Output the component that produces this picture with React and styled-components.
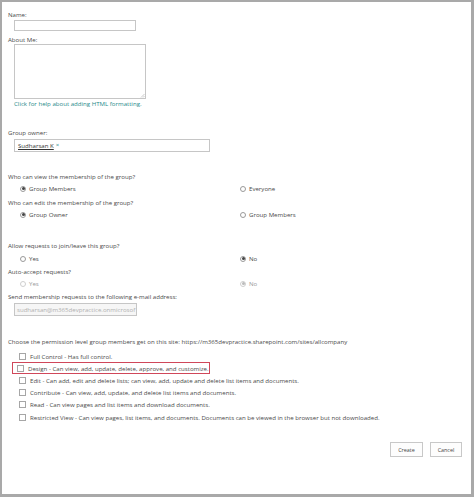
import React from "react";
import styled, { createGlobalStyle } from "styled-components";

const Global = createGlobalStyle`
  html, body { margin: 0; padding: 0; background: #fff; }
  body { font-family: "Open Sans", "Noto Sans", sans-serif; }
  * { box-sizing: border-box; }
`;

const Frame = styled.div`
  width: 474px;
  height: 497px;
  border-style: solid;
  border-color: #a9a9a9;
  border-width: 2px 3px 3px 2px;
  background: #fff;
  padding: 7.5px 9px 0 6px;
  color: #4a4a4a;
  font-size: 6.1px;
  line-height: 9px;
`;

const Label = styled.div`
  margin-top: ${(p) => p.$mt || 0}px;
  height: 9px;
  white-space: nowrap;
`;

const Indent = styled.div`
  padding-left: ${(p) => p.$pl || 6}px;
  margin-top: ${(p) => p.$mt || 0}px;
`;

const TextBox = styled.div`
  width: ${(p) => p.$w}px;
  height: ${(p) => p.$h}px;
  border: 1px solid #c6c6c6;
  background: ${(p) => (p.$disabled ? "#f6f6f6" : "#fff")};
  color: ${(p) => (p.$disabled ? "#b0b0b0" : "#444")};
  display: flex;
  align-items: center;
  padding-left: ${(p) => (p.$disabled ? 2 : 3)}px;
  white-space: nowrap;
  gap: 2px;
`;

const Area = styled.div`
  position: relative;
  width: 132px;
  height: 55px;
  border: 1px solid #c6c6c6;
`;

const Grip = styled.svg`
  position: absolute;
  right: 0;
  bottom: 0;
`;

const HelpLink = styled.div`
  color: #1f8a8a;
  height: 9px;
  white-space: nowrap;
`;

const Person = styled.span`
  color: #333;
  text-decoration: underline;
`;

const Remove = styled.span`
  color: #1f8a8a;
  font-size: 6px;
`;

const RadioRow = styled.div`
  display: grid;
  grid-template-columns: 220px 1fr;
  padding-left: 12px;
  margin-top: ${(p) => p.$mt || 0}px;
  height: 9px;
`;

const Option = styled.label`
  display: flex;
  align-items: center;
  gap: 3px;
  white-space: nowrap;
  color: ${(p) => (p.$disabled ? "#999" : "#4a4a4a")};
`;

const Radio = styled.span`
  width: 6px;
  height: 6px;
  border-radius: 50%;
  border: 1px solid ${(p) => (p.$disabled ? "#cfcfcf" : "#9a9a9a")};
  display: flex;
  align-items: center;
  justify-content: center;
  background: #fff;
  &::after {
    content: "";
    width: 3px;
    height: 3px;
    border-radius: 50%;
    background: ${(p) => (p.$disabled ? "#bbb" : "#444")};
    display: ${(p) => (p.$checked ? "block" : "none")};
  }
`;

const Checks = styled.div`
  margin-top: 4px;
  padding-left: 5px;
`;

const CheckRow = styled.div`
  display: flex;
  align-items: center;
  gap: 4px;
  height: 12.2px;
  white-space: nowrap;
  width: ${(p) => (p.$hl ? "198px" : "auto")};
  margin-left: ${(p) => (p.$hl ? "-1px" : "0")};
  border: ${(p) => (p.$hl ? "1px solid #d0475a" : "1px solid transparent")};
  padding-left: ${(p) => (p.$hl ? "4px" : "5px")};
`;

const Box = styled.span`
  width: 7px;
  height: 7px;
  border: 1px solid #a6a6a6;
  background: #fff;
  flex-shrink: 0;
`;

const Buttons = styled.div`
  display: flex;
  justify-content: flex-end;
  gap: 7px;
  margin-top: 19px;
`;

const Button = styled.button`
  width: ${(p) => p.$w}px;
  height: 15px;
  border: 1px solid #c8c8c8;
  background: #fdfdfd;
  color: #444;
  font-family: inherit;
  font-size: 5.4px;
  padding: 0;
`;

const perms = [
  "Full Control - Has full control.",
  "Design - Can view, add, update, delete, approve, and customize.",
  "Edit - Can add, edit and delete lists; can view, add, update and delete list items and documents.",
  "Contribute - Can view, add, update, and delete list items and documents.",
  "Read - Can view pages and list items and download documents.",
  "Restricted View - Can view pages, list items, and documents. Documents can be viewed in the browser but not downloaded.",
];

export default function App() {
  return (
    <>
      <Global />
      <Frame>
        <Label>Name:</Label>
        <Indent $mt={1.5}>
          <TextBox $w={122} $h={11} />
        </Indent>
        <Label $mt={3.5}>About Me:</Label>
        <Indent $mt={0.5}>
          <Area>
            <Grip width="5" height="5" viewBox="0 0 5 5">
              <path d="M4.5 1 L1 4.5 M4.5 3 L3 4.5" stroke="#aaa" strokeWidth="0.6" />
            </Grip>
          </Area>
          <HelpLink>Click for help about adding HTML formatting.</HelpLink>
        </Indent>

        <Label $mt={20}>Group owner:</Label>
        <Indent $mt={1.5}>
          <TextBox $w={196} $h={13}>
            <Person>Sudharsan K</Person>
            <Remove>×</Remove>
          </TextBox>
        </Indent>

        <Label $mt={20.5}>Who can view the membership of the group?</Label>
        <RadioRow $mt={3}>
          <Option><Radio $checked />Group Members</Option>
          <Option><Radio />Everyone</Option>
        </RadioRow>
        <Label $mt={5}>Who can edit the membership of the group?</Label>
        <RadioRow $mt={3}>
          <Option><Radio $checked />Group Owner</Option>
          <Option><Radio />Group Members</Option>
        </RadioRow>

        <Label $mt={22}>Allow requests to join/leave this group?</Label>
        <RadioRow $mt={4}>
          <Option><Radio />Yes</Option>
          <Option><Radio $checked />No</Option>
        </RadioRow>
        <Label $mt={4}>Auto-accept requests?</Label>
        <RadioRow $mt={3}>
          <Option $disabled><Radio $disabled />Yes</Option>
          <Option $disabled><Radio $disabled $checked />No</Option>
        </RadioRow>
        <Label $mt={4}>Send membership requests to the following e-mail address:</Label>
        <Indent $mt={1.5}>
          <TextBox $w={123} $h={13} $disabled>sudharsan@m365devpractice.onmicrosof</TextBox>
        </Indent>

        <Label $mt={21.5}>
          Choose the permission level group members get on this site: https://m365devpractice.sharepoint.com/sites/allcompany
        </Label>
        <Checks>
          {perms.map((p, i) => (
            <CheckRow key={p} $hl={i === 1}>
              <Box />
              {p}
            </CheckRow>
          ))}
        </Checks>

        <Buttons>
          <Button $w={33}>Create</Button>
          <Button $w={32}>Cancel</Button>
        </Buttons>
      </Frame>
    </>
  );
}
